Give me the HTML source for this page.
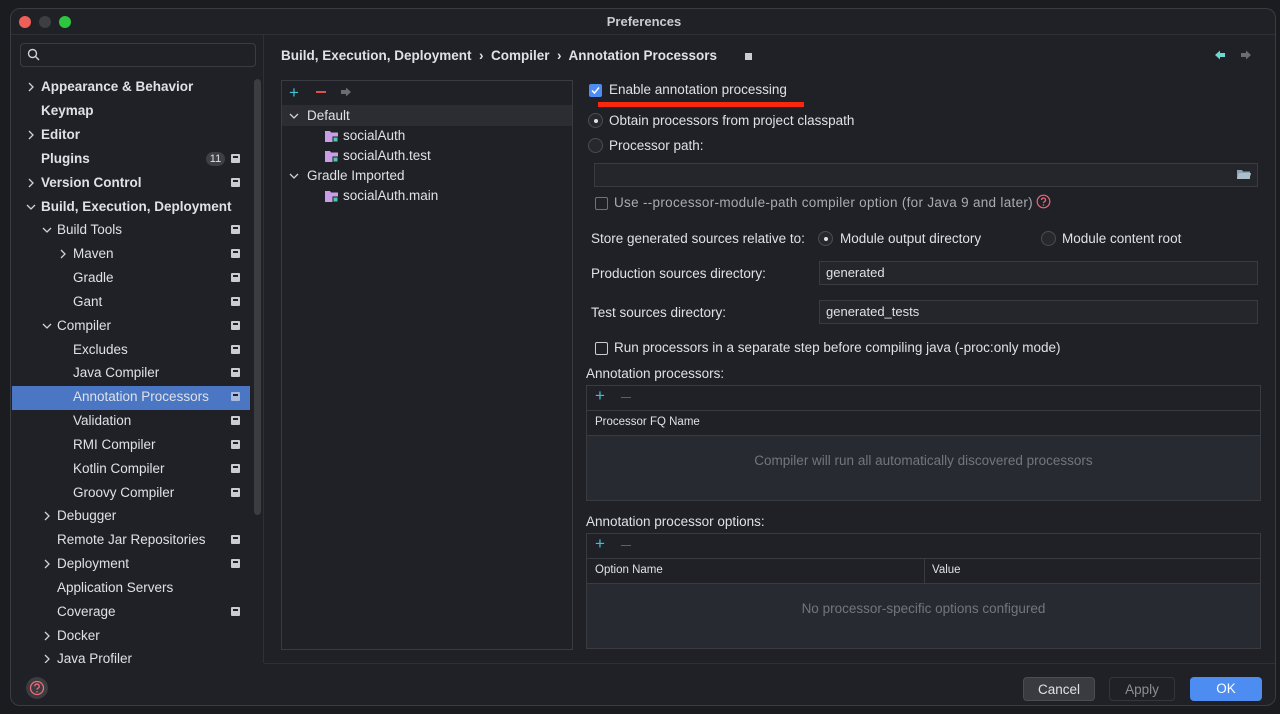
<!DOCTYPE html>
<html><head><meta charset="utf-8"><style>
*{margin:0;padding:0;box-sizing:border-box}
body{width:1280px;height:714px;background:#1b1c1f;font-family:"Liberation Sans",sans-serif;color:#dfe1e5;font-size:13px;position:relative;overflow:hidden}
.a{position:absolute;white-space:nowrap}
#win{position:absolute;left:10px;top:8px;width:1266px;height:698px;background:#1f2126;border:1px solid #3a3c40;border-radius:10px;overflow:hidden}
.r{position:absolute;height:24px;line-height:24px;white-space:nowrap;font-size:13.5px}
.b{font-weight:bold}
.ic{position:absolute;left:220px;top:7px;width:9px;height:9px;background:#c9ccd1;border-radius:1px}
.ic:after{content:"";position:absolute;left:2px;top:2px;width:5px;height:2px;background:#1f2126}
.chev{position:absolute;top:7px;width:10px;height:10px}
.box{position:absolute;border:1px solid #393b40;background:#1f2126}
.inp{position:absolute;border:1px solid #393b40;background:#24262b;height:24px;line-height:22px;padding-left:6px;font-size:13px}
.cb{position:absolute;width:13px;height:13px;border:1.5px solid #8b8e94;border-radius:2px}
.rd{position:absolute;width:15px;height:15px;border:1px solid #4a4d52;border-radius:50%;background:#26282c}
.btn{position:absolute;height:24px;line-height:23px;text-align:center;border-radius:4px;font-size:13.5px}
</style></head><body>
<div id="win">
 <div class="a" style="left:8px;top:7px;width:12px;height:12px;border-radius:50%;background:#ed5f57"></div>
 <div class="a" style="left:28px;top:7px;width:12px;height:12px;border-radius:50%;background:#3d3e42"></div>
 <div class="a" style="left:48px;top:7px;width:12px;height:12px;border-radius:50%;background:#2ec53f"></div>
 <div class="a b" style="left:0;width:1266px;text-align:center;top:5px;font-size:13px;color:#c9cbd0">Preferences</div>
 <div class="a" style="left:0;top:25px;width:1266px;height:1px;background:#2e3034"></div>
 <div class="a" style="left:252px;top:26px;width:1px;height:628px;background:#2e3034"></div>
 <div class="a" style="left:9px;top:34px;width:236px;height:24px;border:1px solid #3a3c40;border-radius:4px;background:#1f2126"></div>
 <svg class="a" style="left:16px;top:39px" width="14" height="14"><circle cx="5.5" cy="5.5" r="4" fill="none" stroke="#cfd1d5" stroke-width="1.4"/><path d="M8.5 8.5L12 12" stroke="#cfd1d5" stroke-width="1.4"/></svg>
 <div class="a" style="left:243px;top:70px;width:7px;height:436px;border-radius:4px;background:#3b3d41"></div>
 <div class="a" style="left:1px;top:377px;width:238px;height:24px;background:#4a76c4"></div>
 <div id="side" class="a" style="left:0;top:0;width:252px;height:654px;overflow:hidden"></div>
 <div class="a" style="left:15px;top:668px;width:22px;height:22px;border-radius:50%;background:#3a3c40"></div>
 <svg class="a" style="left:18px;top:671px" width="16" height="16"><circle cx="8" cy="8" r="6.5" fill="none" stroke="#f0687a" stroke-width="1.3"/><path d="M5.8 6.3a2.2 2.2 0 1 1 3 2c-.7.3-.8.7-.8 1.4" fill="none" stroke="#f0687a" stroke-width="1.3"/><circle cx="8" cy="11.8" r=".8" fill="#f0687a"/></svg>
 <div class="a b" style="left:270px;top:39px;font-size:13.5px">Build, Execution, Deployment &nbsp;›&nbsp; Compiler &nbsp;›&nbsp; Annotation Processors</div>
 <div class="a" style="left:734px;top:44px;width:7px;height:7px;background:#c9ccd1"></div>
 <svg class="a" style="left:1203px;top:40px" width="12" height="12"><path d="M1 6L6 1.5V4H11V8H6V10.5Z" fill="#6fd6d0"/></svg>
 <svg class="a" style="left:1229px;top:40px" width="12" height="12"><path d="M11 6L6 1.5V4H1V8H6V10.5Z" fill="#6b6d71"/></svg>
 <div class="box" style="left:270px;top:71px;width:292px;height:570px"></div>
 <div class="a" style="left:278px;top:74px;font-size:17px;color:#3fc1d4">+</div>
 <div class="a" style="left:305px;top:82px;width:10px;height:2px;background:#e0514b"></div>
 <svg class="a" style="left:329px;top:77px" width="12" height="12"><path d="M11 6L6 1.5V4H1V8H6V10.5Z" fill="#6b6d71"/></svg>
 <div class="a" style="left:271px;top:96px;width:290px;height:21px;background:#2b2d32"></div>
 <svg class="a" style="left:278px;top:102px" width="10" height="10"><path d="M1 3L5 7L9 3" fill="none" stroke="#cfd1d5" stroke-width="1.3"/></svg>
 <div class="a" style="left:296px;top:99px;font-size:13.5px">Default</div>
 <svg class="a" style="left:278px;top:162px" width="10" height="10"><path d="M1 3L5 7L9 3" fill="none" stroke="#cfd1d5" stroke-width="1.3"/></svg>
 <div class="a" style="left:296px;top:159px;font-size:13.5px">Gradle Imported</div>
 <div id="mods"></div>
 <div class="a" style="left:578px;top:75px;width:13px;height:13px;border-radius:2px;background:#4d8cf0"></div>
 <svg class="a" style="left:579px;top:76px" width="11" height="11"><path d="M2 5.5L4.5 8L9 2.5" fill="none" stroke="#fff" stroke-width="1.5"/></svg>
 <div class="a" style="left:598px;top:73px;font-size:13.5px">Enable annotation processing</div>
 <div class="a" style="left:587px;top:93px;width:206px;height:5px;background:#f7280e"></div>
 <div class="rd" style="left:577px;top:104px"></div><div class="a" style="left:583px;top:110px;width:4px;height:4px;border-radius:50%;background:#dfe1e5"></div>
 <div class="a" style="left:598px;top:104px;font-size:13.5px">Obtain processors from project classpath</div>
 <div class="rd" style="left:577px;top:129px"></div>
 <div class="a" style="left:598px;top:129px;font-size:13.5px">Processor path:</div>
 <div class="inp" style="left:583px;top:154px;width:664px"></div>
 <svg class="a" style="left:1226px;top:160px" width="14" height="11"><path d="M0 1h5l1 1.5h7V10H0z" fill="#8aa3b5"/><path d="M2 4h12l-1.5 6H0z" fill="#aebfcc"/></svg>
 <div class="cb" style="left:584px;top:188px;border-color:#6f7278"></div>
 <div class="a" style="left:603px;top:186px;font-size:13.5px;color:#a8abb0;letter-spacing:0.3px">Use --processor-module-path compiler option (for Java 9 and later)</div>
 <svg class="a" style="left:1025px;top:185px" width="15" height="15"><circle cx="7.5" cy="7.5" r="6.3" fill="none" stroke="#f0687a" stroke-width="1.2"/><path d="M5.5 6a2 2 0 1 1 2.8 1.8c-.6.3-.8.6-.8 1.3" fill="none" stroke="#f0687a" stroke-width="1.2"/><circle cx="7.5" cy="11" r=".8" fill="#f0687a"/></svg>
 <div class="a" style="left:580px;top:222px;font-size:13.5px">Store generated sources relative to:</div>
 <div class="rd" style="left:807px;top:222px"></div><div class="a" style="left:813px;top:228px;width:4px;height:4px;border-radius:50%;background:#dfe1e5"></div>
 <div class="a" style="left:829px;top:222px;font-size:13.5px">Module output directory</div>
 <div class="rd" style="left:1030px;top:222px"></div>
 <div class="a" style="left:1051px;top:222px;font-size:13.5px">Module content root</div>
 <div class="a" style="left:580px;top:257px;font-size:13.5px">Production sources directory:</div>
 <div class="inp" style="left:808px;top:252px;width:439px">generated</div>
 <div class="a" style="left:580px;top:296px;font-size:13.5px">Test sources directory:</div>
 <div class="inp" style="left:808px;top:291px;width:439px">generated_tests</div>
 <div class="cb" style="left:584px;top:333px;border-color:#c9ccd1"></div>
 <div class="a" style="left:603px;top:331px;font-size:13.5px">Run processors in a separate step before compiling java (-proc:only mode)</div>
 <div class="a" style="left:575px;top:357px;font-size:13.5px">Annotation processors:</div>
 <div class="box" style="left:575px;top:376px;width:675px;height:116px"></div>
 <div class="a" style="left:584px;top:377px;font-size:17px;color:#3fc1d4">+</div>
 <div class="a" style="left:610px;top:388px;width:10px;height:1px;background:#5d6065"></div>
 <div class="a" style="left:576px;top:401px;width:673px;height:1px;background:#393b40"></div>
 <div class="a" style="left:584px;top:407px;font-size:11.5px">Processor FQ Name</div>
 <div class="a" style="left:576px;top:426px;width:673px;height:65px;background:#272a30;border-top:1px solid #393b40"></div>
 <div class="a" style="left:576px;top:444px;width:673px;text-align:center;font-size:13.5px;color:#73767c">Compiler will run all automatically discovered processors</div>
 <div class="a" style="left:575px;top:505px;font-size:13.5px">Annotation processor options:</div>
 <div class="box" style="left:575px;top:524px;width:675px;height:116px"></div>
 <div class="a" style="left:584px;top:525px;font-size:17px;color:#3fc1d4">+</div>
 <div class="a" style="left:610px;top:536px;width:10px;height:1px;background:#5d6065"></div>
 <div class="a" style="left:576px;top:549px;width:673px;height:1px;background:#393b40"></div>
 <div class="a" style="left:913px;top:550px;width:1px;height:24px;background:#393b40"></div>
 <div class="a" style="left:584px;top:555px;font-size:11.5px">Option Name</div>
 <div class="a" style="left:921px;top:555px;font-size:11.5px">Value</div>
 <div class="a" style="left:576px;top:574px;width:673px;height:65px;background:#272a30;border-top:1px solid #393b40"></div>
 <div class="a" style="left:576px;top:592px;width:673px;text-align:center;font-size:13.5px;color:#73767c">No processor-specific options configured</div>
 <div class="a" style="left:253px;top:654px;width:1013px;height:1px;background:#2e3034"></div>
 <div class="btn" style="left:1012px;top:668px;width:72px;background:#393b40;border:1px solid #4a4d52">Cancel</div>
 <div class="btn" style="left:1098px;top:668px;width:66px;border:1px solid #34363b;color:#8b8e94">Apply</div>
 <div class="btn" style="left:1179px;top:668px;width:72px;background:#4d8cf0;color:#fff">OK</div>
</div>
<script>
var rows=[[86,0,'r','Appearance & Behavior',1,0],[110,0,'','Keymap',1,0],[134,0,'r','Editor',1,0],[158,0,'','Plugins',1,1],[182,0,'r','Version Control',1,1],[206,0,'d','Build, Execution, Deployment',1,0],
[229,1,'d','Build Tools',0,1],[253,2,'r','Maven',0,1],[277,2,'','Gradle',0,1],[301,2,'','Gant',0,1],[325,1,'d','Compiler',0,1],[349,2,'','Excludes',0,1],[372,2,'','Java Compiler',0,1],[396,2,'','Annotation Processors',0,1],[420,2,'','Validation',0,1],[444,2,'','RMI Compiler',0,1],[468,2,'','Kotlin Compiler',0,1],[492,2,'','Groovy Compiler',0,1],
[515,1,'r','Debugger',0,0],[539,1,'','Remote Jar Repositories',0,1],[563,1,'r','Deployment',0,1],[587,1,'','Application Servers',0,0],[611,1,'','Coverage',0,1],[635,1,'r','Docker',0,0],[658,1,'r','Java Profiler',0,0]];
var h='';
rows.forEach(function(r){var top=r[0]-8-12,tx=[30,46,62][r[1]],ax=tx-15;
h+='<div class="r'+(r[4]?' b':'')+'" style="left:0;width:252px;top:'+top+'px">';
if(r[2]=='r')h+='<svg class="chev" style="left:'+ax+'px" viewBox="0 0 10 10"><path d="M3 1L7 5L3 9" fill="none" stroke="#cfd1d5" stroke-width="1.3"/></svg>';
if(r[2]=='d')h+='<svg class="chev" style="left:'+ax+'px" viewBox="0 0 10 10"><path d="M1 3L5 7L9 3" fill="none" stroke="#cfd1d5" stroke-width="1.3"/></svg>';
h+='<span style="position:absolute;left:'+tx+'px">'+r[3].replace('&','&amp;')+'</span>';
if(r[5])h+='<div class="ic"'+(r[0]==396?' style="background:#a9bbdc"':'')+'></div>';
if(r[3]=='Plugins')h+='<div style="position:absolute;left:195px;top:5px;width:19px;height:14px;border-radius:7px;background:#3d3f44;font-size:11px;line-height:14px;text-align:center;font-weight:normal">11</div>';
h+='</div>';});
document.getElementById('side').innerHTML=h;
var m='';[[127,'socialAuth'],[147,'socialAuth.test'],[187,'socialAuth.main']].forEach(function(x){
m+='<svg class="a" style="left:314px;top:'+(x[0]-6)+'px" width="14" height="13"><path d="M0 1h5l1 1.5h7V12H0z" fill="#c89ee8"/><rect x="8" y="7" width="5" height="5" fill="#4fc7a8" stroke="#1f2126" stroke-width="1"/></svg>';
m+='<div class="a" style="left:332px;top:'+(x[0]-8)+'px;font-size:13.5px">'+x[1]+'</div>';});
document.getElementById('mods').innerHTML=m;
</script>
</body></html>
